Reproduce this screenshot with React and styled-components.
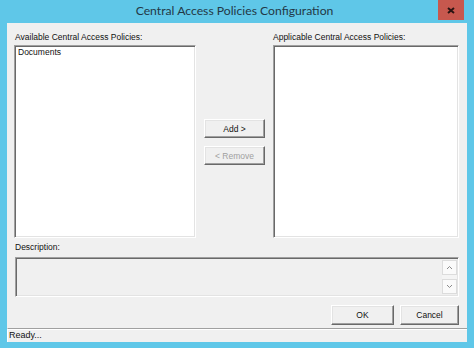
import React from 'react';
import styled, { createGlobalStyle } from 'styled-components';

const Global = createGlobalStyle`
  html, body { margin: 0; padding: 0; }
  body { background: #5fc7e8; }
`;

const Window = styled.div`
  width: 474px;
  height: 348px;
  background: #5fc7e8;
  display: flex;
  flex-direction: column;
  font-family: "Liberation Sans", Arial, sans-serif;
  font-size: 8.5px;
  color: #111;
`;

const TitleBar = styled.div`
  height: 23px;
  display: grid;
  grid-template-columns: 31px 1fr 31px;
  align-items: start;
  padding-right: 5px;
`;

const Title = styled.div`
  grid-column: 2;
  text-align: center;
  font-family: Lato, "Noto Sans", sans-serif;
  font-size: 12.2px;
  line-height: 22px;
  color: #233846;
`;

const CloseButton = styled.div`
  width: 26px;
  height: 20px;
  background: #c7584e;
  display: flex;
  align-items: center;
  justify-content: center;
`;

const Client = styled.div`
  flex: 1;
  margin: 0 7px 6px;
  background: #f0f0f0;
  display: flex;
  flex-direction: column;
`;

const Lists = styled.div`
  display: grid;
  grid-template-columns: 182px 77px 186px;
  padding: 9px 8px 0 7px;
`;

const Column = styled.div`
  display: flex;
  flex-direction: column;
`;

const Label = styled.div`
  height: 13px;
  line-height: 11px;
  padding-left: ${p => p.$indent || 0}px;
`;

const Sunken = styled.div`
  box-sizing: border-box;
  border-top: 1px solid #a0a0a0;
  border-left: 1px solid #a0a0a0;
  border-right: 1px solid #ffffff;
  border-bottom: 1px solid #ffffff;
  box-shadow: inset 1px 1px 0 #696969, inset -1px -1px 0 #e3e3e3;
`;

const ListBox = styled(Sunken)`
  height: 193px;
  background: #ffffff;
  padding: 1px 3px;
`;

const ListItem = styled.div`
  line-height: 11px;
`;

const Middle = styled.div`
  display: flex;
  flex-direction: column;
  align-items: center;
  gap: 8px;
  padding-top: 87px;
`;

const Button = styled.div`
  box-sizing: border-box;
  width: ${p => p.$w || 61}px;
  height: ${p => p.$h || 19}px;
  display: flex;
  align-items: center;
  justify-content: center;
  background: #f0f0f0;
  border-top: 1px solid #ffffff;
  border-left: 1px solid #ffffff;
  border-right: 1px solid #696969;
  border-bottom: 1px solid #696969;
  box-shadow: inset -1px -1px 0 #a0a0a0, inset 1px 1px 0 #e3e3e3;
  color: ${p => (p.$disabled ? '#a0a0a0' : '#111')};
`;

const DescSection = styled.div`
  padding: 4px 8px 0 8px;
  display: flex;
  flex-direction: column;
`;

const DescBox = styled(Sunken)`
  height: 40px;
  margin-top: 2px;
  background: #f0f0f0;
  display: flex;
  justify-content: flex-end;
  padding: 2px 1px 2px 2px;
`;

const ScrollBar = styled.div`
  width: 15px;
  display: flex;
  flex-direction: column;
  justify-content: space-between;
  background: #f4f4f4;
`;

const ScrollArrow = styled.div`
  height: 15px;
  box-sizing: border-box;
  border: 1px solid #dcdcdc;
  background: #fafafa;
  display: flex;
  align-items: center;
  justify-content: center;
`;

const Footer = styled.div`
  display: flex;
  justify-content: flex-end;
  gap: 6px;
  padding: 8px 8px 0;
`;

const StatusBar = styled.div`
  margin-top: auto;
  height: 13px;
  border-top: 1px solid #a0a0a0;
  box-shadow: inset 0 1px 0 #ffffff;
  border-left: 1px solid #ffffff;
  padding-left: 1px;
  line-height: 13px;
  font-size: 9px;
  color: #111;
`;

const Chevron = ({ up }) => (
  <svg width="7" height="5" viewBox="0 0 7 5">
    <path
      d={up ? 'M1 4 L3.5 1.5 L6 4' : 'M1 1 L3.5 3.5 L6 1'}
      fill="none"
      stroke="#8a8a8a"
      strokeWidth="1"
    />
  </svg>
);

export default function App() {
  return (
    <Window>
      <Global />
      <TitleBar>
        <Title>Central Access Policies Configuration</Title>
        <CloseButton>
          <svg width="8" height="7" viewBox="0 0 8 7">
            <path d="M1 1 L7 6 M7 1 L1 6" stroke="#2a1412" strokeWidth="2" />
          </svg>
        </CloseButton>
      </TitleBar>
      <Client>
        <Lists>
          <Column>
            <Label $indent={1}>Available Central Access Policies:</Label>
            <ListBox>
              <ListItem>Documents</ListItem>
            </ListBox>
          </Column>
          <Middle>
            <Button>Add &gt;</Button>
            <Button $disabled>&lt; Remove</Button>
          </Middle>
          <Column>
            <Label>Applicable Central Access Policies:</Label>
            <ListBox />
          </Column>
        </Lists>
        <DescSection>
          <Label>Description:</Label>
          <DescBox>
            <ScrollBar>
              <ScrollArrow><Chevron up /></ScrollArrow>
              <ScrollArrow><Chevron /></ScrollArrow>
            </ScrollBar>
          </DescBox>
        </DescSection>
        <Footer>
          <Button $w={63} $h={20}>OK</Button>
          <Button $w={59} $h={20}>Cancel</Button>
        </Footer>
        <StatusBar>Ready...</StatusBar>
      </Client>
    </Window>
  );
}
